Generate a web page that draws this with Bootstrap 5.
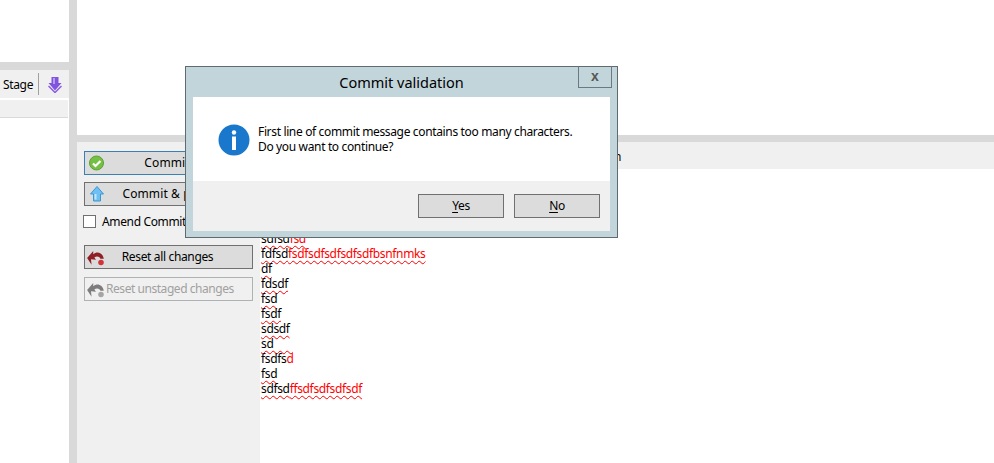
<!DOCTYPE html>
<html lang="en">
<head>
<meta charset="utf-8">
<title>Commit validation</title>
<link href="https://cdn.jsdelivr.net/npm/bootstrap@5.3.0/dist/css/bootstrap.min.css" rel="stylesheet">
<script src="https://cdn.jsdelivr.net/npm/bootstrap@5.3.0/dist/js/bootstrap.bundle.min.js"></script>
<style>
html,body{height:463px;overflow:hidden;background:#fff}
body{font:12px/15px "Noto Sans","Open Sans",sans-serif;letter-spacing:-.35px;color:#000}
.app-shell{width:994px;height:463px;position:relative}
.left-col{width:69px}
.split-v{width:8px;background:#d9d9d9}
.left-top{height:62px}
.split-h{height:8px;background:#d9d9d9}
.tool-row{height:28px;background:#f0f0f0;padding-left:3px}
.tool-sep{width:1px;height:22px;background:#a0a0a0;margin:0 9px 0 5px}
.strip-row{height:18px;margin-top:2px;margin-right:1px;background:#f0f0f0;border-bottom:1px solid #d9d9d9}
.right-top{height:135px}
.split-h2{height:7px;background:#d9d9d9}
.msg-head{height:27px;background:#f0f0f0;padding-left:354px;line-height:30px}
.side-panel{width:183px;background:#f0f0f0;padding:9px 7px 0}
.act-btn{display:flex;align-items:center;width:169px;height:24px;padding:0 3px;border:1px solid #707070;border-radius:0;background:#dcdcdc;color:#000;font:inherit;letter-spacing:inherit;margin-bottom:7px;white-space:nowrap}
.act-btn:hover,.act-btn:active{background:#dcdcdc;border-color:#707070;color:#000}
.act-btn svg{width:18px;height:18px;flex:none}
.act-btn span{flex:1;text-align:center;margin-right:21px;padding-bottom:1px}
.act-btn.is-focus{border-color:#3c7fb1}
.act-btn.is-open{letter-spacing:.1px}
.act-btn.is-reset{margin-bottom:8px;padding-left:1px}
.act-btn.is-reset svg{width:20px;height:20px}
.act-btn.is-reset span{margin-right:20px}
.act-btn:disabled{opacity:1;background:#f0f0f0;border-color:#adb2b5;color:#a0a0a0;letter-spacing:-.45px}
.amend-row{height:15px;margin:8px 0 16px -1px;white-space:nowrap}
.amend-box{width:13px;height:13px;background:#fff;border:1px solid #707070;margin-right:6px;flex:none}
.editor-pane{padding:2px 0 0 1px;background:#fff}
.editor-pane div{height:15px;white-space:nowrap}
.wavy{text-decoration:underline wavy #f00 1px;text-underline-offset:2px;text-decoration-skip-ink:none}
.red-txt{color:#f00}
.dlg{position:absolute;left:185px;top:66px;width:433px;height:172px;background:#c2d5db;border:1px solid #5f6b70;padding:30px 7px 6px}
.dlg-title{position:absolute;left:0;right:0;top:6px;text-align:center;font-size:14.5px;line-height:19px;letter-spacing:0}
.dlg-close{position:absolute;right:5px;top:-1px;width:34px;height:22px;background:transparent;border:1px solid #6a7a80;border-top-color:#5f6b70;color:#555;font:700 14px/16px "Liberation Sans",sans-serif;padding:0 0 2px}
.dlg-body{height:84px;background:#fff;padding:27px 0 0 25px}
.dlg-icon{width:32px;height:32px;margin-right:8px;flex:none}
.dlg-foot{height:50px;background:#f0f0f0;padding:13px 10px 0 0;gap:10px}
.dlg-btn{width:86px;height:24px;border:1px solid #707070;border-radius:0;background:#dcdcdc;color:#000;font:inherit;letter-spacing:inherit;padding:0 0 2px}
.dlg-btn:hover{background:#dcdcdc;border-color:#707070;color:#000}
.dlg-btn u{text-underline-offset:2px}
</style>
</head>
<body>
<div class="app-shell d-flex">
  <div class="left-col">
    <div class="left-top"></div>
    <div class="split-h"></div>
    <div class="tool-row d-flex align-items-center">
      <span>Stage</span>
      <i class="tool-sep"></i>
      <svg width="14" height="17" viewBox="0 0 14 17"><path d="M3.500 1h7v6H13.500l-6.500 7.500L.5 7h3z" fill="#7f55e0"/><path d="M.5 10l6.500 6.500 6.500-6.500" fill="none" stroke="#8a5ce6" stroke-width="1.500"/><path d="M5 2h2v6H5z" fill="#b79cf2"/></svg>
    </div>
    <div class="strip-row"></div>
  </div>
  <div class="split-v"></div>
  <div class="flex-grow-1 d-flex flex-column">
    <div class="right-top"></div>
    <div class="split-h2"></div>
    <div class="d-flex flex-grow-1">
      <div class="side-panel">
        <button class="btn act-btn is-focus is-open" type="button">
          <svg viewBox="0 0 18 18"><circle cx="8.500" cy="9" r="7" fill="#74c043" stroke="#5fa038"/><path d="M5 9.500l2.500 2.500 5-5" fill="none" stroke="#fff" stroke-width="2.200"/></svg>
          <span>Commit</span>
        </button>
        <button class="btn act-btn is-open" type="button">
          <svg viewBox="0 0 18 18"><path d="M9 1.500L15.500 9H12.500v7h-7V9H2.500z" fill="#6fc0f2" stroke="#3b96d6"/><path d="M7.500 9v5.500" stroke="#bfe6fb" stroke-width="2"/></svg>
          <span>Commit &amp; push</span>
        </button>
        <div class="amend-row d-flex align-items-center"><i class="amend-box"></i>Amend Commit</div>
        <button class="btn act-btn is-reset" type="button">
          <svg viewBox="0 0 18 18"><path d="M1 10L6.500 3.500V6.500C10 3.500 15 5 16 10.500H13C12 8.500 9.500 8 7.500 9.500L9 11.500 4.500 11 5 16z" fill="#8f1f24"/><circle cx="13.500" cy="14" r="2.500" fill="#d2343c"/></svg>
          <span>Reset all changes</span>
        </button>
        <button class="btn act-btn is-reset" type="button" disabled>
          <svg viewBox="0 0 18 18"><path d="M1 10L6.500 3.500V6.500C10 3.500 15 5 16 10.500H13C12 8.500 9.500 8 7.500 9.500L9 11.500 4.500 11 5 16z" fill="#7d7d7d"/><circle cx="13.500" cy="14" r="2.500" fill="#a5a5a5"/></svg>
          <span>Reset unstaged changes</span>
        </button>
      </div>
      <div class="d-flex flex-column flex-grow-1">
        <div class="msg-head">n</div>
        <div class="editor-pane flex-grow-1">
          <div></div><div></div><div></div><div></div>
          <div><span class="wavy">sdfsd<span class="red-txt">fsd</span></span></div>
          <div><span class="wavy">fdfsd<span class="red-txt">fsdfsdfsdfsdfsdfbsnfnmks</span></span></div>
          <div><span class="wavy">df</span></div>
          <div><span class="wavy">fdsdf</span></div>
          <div><span class="wavy">fsd</span></div>
          <div><span class="wavy">fsdf</span></div>
          <div><span class="wavy">sdsdf</span></div>
          <div><span class="wavy">sd&nbsp;&nbsp;&nbsp;&nbsp;&nbsp;&nbsp;&nbsp;</span></div>
          <div>fsdfs<span class="red-txt">d</span></div>
          <div><span class="wavy">fsd</span></div>
          <div><span class="wavy">sdfsd<span class="red-txt">ffsdfsdfsdfsdf</span></span></div>
        </div>
      </div>
    </div>
  </div>

  <div class="dlg">
    <div class="dlg-title">Commit validation</div>
    <button class="dlg-close" type="button">x</button>
    <div class="dlg-body d-flex">
      <svg class="dlg-icon" viewBox="0 0 32 32"><circle cx="16" cy="16" r="15.500" fill="#1a78cc"/><circle cx="16" cy="8.500" r="2.200" fill="#fff"/><rect x="14" y="12.500" width="4" height="13.500" fill="#fff"/></svg>
      <div>First line of commit message contains too many characters.<br>Do you want to continue?</div>
    </div>
    <div class="dlg-foot d-flex justify-content-end">
      <button class="btn dlg-btn" type="button"><u>Y</u>es</button>
      <button class="btn dlg-btn" type="button"><u>N</u>o</button>
    </div>
  </div>
</div>
</body>
</html>
